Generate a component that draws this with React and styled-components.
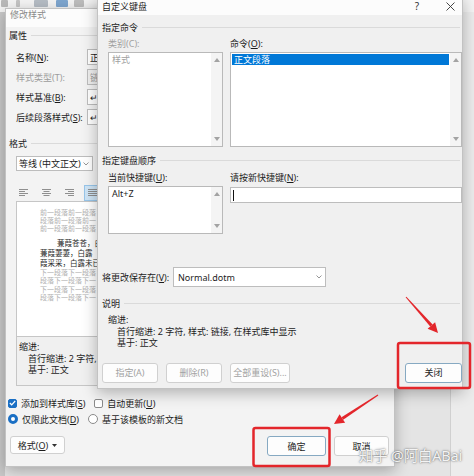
import React from "react";
import styled, { createGlobalStyle } from "styled-components";

const GlobalStyle = createGlobalStyle`
  html, body {
    margin: 0;
    padding: 0;
  }
  body {
    width: 474px;
    height: 476px;
    overflow: hidden;
    background: #e3e3e3;
    font-family: "Noto Sans", "Noto Sans CJK SC", sans-serif;
  }
`;

const Desktop = styled.div`
  position: relative;
  width: 474px;
  height: 476px;
  overflow: hidden;
  display: flex;
  flex-direction: column;
  font-family: "Noto Sans", "Noto Sans CJK SC", sans-serif;
  font-size: 9px;
  color: #1c1c1c;
`;

const Ribbon = styled.div`
  height: 12px;
  flex: none;
  display: flex;
  gap: 6px;
  padding-left: 1px;
  background: #f4f4f4;
`;

const RibbonIcon = styled.div`
  width: ${(p) => p.$w}px;
  height: 7px;
  margin-left: ${(p) => p.$ml || 0}px;
  background: ${(p) => p.$color};
  border-radius: 1px;
`;

const Workspace = styled.div`
  flex: 1;
  display: flex;
`;

const Gutter = styled.div`
  width: 5px;
  background: #c9c9c9;
`;

const Page = styled.div`
  flex: 1;
  background: #e4e4e4;
`;

const ScrollTrack = styled.div`
  width: 23px;
  background: #ececec;
  border-left: 1px solid #d0d0d0;
`;

/* ---------- windows ---------- */

const Window = styled.div`
  position: absolute;
  left: ${(p) => p.$left}px;
  top: ${(p) => p.$top}px;
  width: ${(p) => p.$width}px;
  height: ${(p) => p.$height}px;
  box-sizing: border-box;
  border: 1px solid #c2c2c2;
  background: ${(p) => p.$bg};
  box-shadow: 0 4px 14px rgba(0, 0, 0, 0.28);
  display: flex;
  flex-direction: column;
  overflow: hidden;
`;

const TitleBar = styled.div`
  height: ${(p) => p.$h}px;
  flex: none;
  display: flex;
  align-items: ${(p) => (p.$top ? "flex-start" : "center")};
  padding-left: 4px;
  background: #fcfcfc;
  color: ${(p) => p.$color || "#1c1c1c"};
  font-size: 9px;
  line-height: 11px;
`;

const TitleControls = styled.div`
  margin-left: auto;
  margin-right: 1px;
  display: flex;
  gap: 11px;
`;

const TitleControl = styled.div`
  width: 22px;
  height: 18px;
  display: flex;
  align-items: center;
  justify-content: center;
  font-size: 10px;
  color: #333;
`;

const SectionHeader = styled.div`
  height: ${(p) => p.$h || 16}px;
  margin-top: ${(p) => p.$mt || 0}px;
  margin-right: 2px;
  flex: none;
  display: flex;
  align-items: center;
  gap: 4px;
  white-space: nowrap;
  &::after {
    content: "";
    flex: 1;
    height: 1px;
    background: #dadada;
  }
`;

/* ---------- modify style dialog ---------- */

const ModifyBody = styled.div`
  flex: 1;
  display: flex;
  flex-direction: column;
  padding: 0 4px 0 3px;
`;

/* the right part of this dialog lies under the keyboard dialog,
   so its controls stop just past where that window begins */
const FieldGrid = styled.div`
  display: grid;
  grid-template-columns: 71px 13px;
  grid-auto-rows: 20px;
  align-items: center;
  margin: 4px 0 0 7px;
`;

const FieldLabel = styled.div`
  color: ${(p) => (p.$disabled ? "#9c9c9c" : "#1c1c1c")};
  white-space: nowrap;
`;

const FieldInput = styled.div`
  height: 16px;
  box-sizing: border-box;
  display: flex;
  align-items: center;
  padding-left: 2px;
  border: 1px solid #bdbdbd;
  border-right: none;
  background: ${(p) => (p.$disabled ? "#efefef" : "#fff")};
  color: ${(p) => (p.$disabled ? "#9c9c9c" : "#1c1c1c")};
  white-space: nowrap;
`;

const FontRow = styled.div`
  display: flex;
  gap: 5px;
  margin: 5px 0 0 7px;
`;

const SelectBox = styled.div`
  width: ${(p) => p.$w}px;
  height: ${(p) => p.$h}px;
  box-sizing: border-box;
  display: flex;
  align-items: center;
  gap: 2px;
  padding: 0 3px 0 ${(p) => p.$pl || 2}px;
  border: 1px solid #bdbdbd;
  background: #fff;
  white-space: nowrap;
  flex: none;
`;

const SelectText = styled.span`
  flex: 1;
`;

const AlignRow = styled.div`
  display: flex;
  gap: 7px;
  margin: 14px 0 0 6px;
`;

const AlignButton = styled.div`
  width: 16px;
  height: 16px;
  box-sizing: border-box;
  display: flex;
  align-items: center;
  justify-content: center;
  border: 1px solid ${(p) => (p.$active ? "#98c6ea" : "transparent")};
  background: ${(p) => (p.$active ? "#cfe5f6" : "transparent")};
`;

const Preview = styled.div`
  height: 135px;
  box-sizing: border-box;
  margin-left: 7px;
  padding: 7px 0 0 23px;
  border: 1px solid #c6c6c6;
  border-bottom: none;
  background: #fff;
  overflow: hidden;
  white-space: nowrap;
`;

const PreviewLine = styled.div`
  height: ${(p) => p.$lh}px;
  line-height: ${(p) => p.$lh}px;
  margin-top: ${(p) => p.$mt || 0}px;
  padding-left: ${(p) => p.$indent || 0}px;
  font-size: ${(p) => (p.$muted ? 7 : 7.5)}px;
  color: ${(p) => (p.$muted ? "#b0b0b0" : "#2a2a2a")};
`;

const Description = styled.div`
  height: 50px;
  box-sizing: border-box;
  margin-left: 7px;
  padding: 4px 0 0 2px;
  border: 1px solid #c6c6c6;
  background: #f0f0f0;
  line-height: 11.5px;
  white-space: nowrap;
  overflow: hidden;
`;

const DescLine = styled.div`
  padding-left: ${(p) => p.$indent || 0}px;
`;

const OptionRow = styled.div`
  height: 14px;
  margin-top: ${(p) => p.$mt}px;
  margin-left: -1px;
  display: flex;
  align-items: center;
  gap: 9px;
  white-space: nowrap;
`;

const OptionItem = styled.div`
  display: flex;
  align-items: center;
  gap: 4px;
`;

const Checkbox = styled.div`
  width: 9px;
  height: 9px;
  box-sizing: border-box;
  border-radius: 2px;
  border: 1px solid ${(p) => (p.$checked ? "#1a6fc4" : "#8a8a8a")};
  background: ${(p) => (p.$checked ? "#1a6fc4" : "#fff")};
  display: flex;
  align-items: center;
  justify-content: center;
`;

const Radio = styled.div`
  width: 10px;
  height: 10px;
  box-sizing: border-box;
  border-radius: 50%;
  border: ${(p) => (p.$checked ? "3px solid #1a6fc4" : "1px solid #8a8a8a")};
  background: #fff;
`;

const ButtonRow = styled.div`
  display: flex;
  align-items: flex-start;
  gap: 8px;
  margin-top: ${(p) => p.$mt}px;
  padding: 0 ${(p) => p.$pr || 0}px 0 ${(p) => p.$pl || 0}px;
`;

const Spacer = styled.div`
  flex: 1;
`;

const Button = styled.div`
  width: ${(p) => p.$w}px;
  height: ${(p) => p.$h || 20}px;
  box-sizing: border-box;
  display: flex;
  align-items: center;
  justify-content: center;
  gap: 4px;
  border-radius: 3px;
  border: 1px solid ${(p) => (p.$primary ? "#86a9c2" : "#d0d0d0")};
  background: #fdfdfd;
  color: ${(p) => (p.$disabled ? "#a2a2a2" : "#1c1c1c")};
  white-space: nowrap;
  flex: none;
`;

/* ---------- customize keyboard dialog ---------- */

const KbBody = styled.div`
  flex: 1;
  display: flex;
  flex-direction: column;
  padding-left: 4px;
`;

const TwoCols = styled.div`
  display: grid;
  grid-template-columns: 115px 232px;
  grid-template-rows: 12px auto;
  column-gap: 7px;
  row-gap: 2px;
  align-items: start;
  margin: ${(p) => p.$mt}px 0 0 6px;
`;

const ColLabel = styled.div`
  height: 12px;
  line-height: 12px;
  white-space: nowrap;
  color: ${(p) => (p.$disabled ? "#a0a0a0" : "#1c1c1c")};
`;

const ListBox = styled.div`
  height: ${(p) => p.$h}px;
  box-sizing: border-box;
  display: flex;
  border: 1px solid #b9b9b9;
  background: #fff;
`;

const ListContent = styled.div`
  flex: 1;
  padding: 1px;
`;

const ListItem = styled.div`
  height: 11px;
  line-height: 11px;
  padding-left: 2px;
  background: ${(p) => (p.$selected ? "#0078d7" : "transparent")};
  color: ${(p) => (p.$selected ? "#fff" : p.$disabled ? "#a0a0a0" : "#1c1c1c")};
`;

const ScrollCol = styled.div`
  width: 11px;
  display: flex;
  flex-direction: column;
  align-items: center;
  justify-content: space-between;
  padding: 5px 0;
  background: #f4f4f4;
`;

const KeyInput = styled.div`
  height: 16px;
  margin-top: 1px;
  box-sizing: border-box;
  display: flex;
  align-items: center;
  padding-left: 2px;
  border: 1px solid #bdbdbd;
  background: #fff;
`;

const Caret = styled.div`
  width: 1px;
  height: 11px;
  background: #111;
`;

const SaveRow = styled.div`
  height: 20px;
  margin-top: 33px;
  display: flex;
  align-items: center;
`;

const SaveLabel = styled.div`
  width: 71px;
  white-space: nowrap;
`;

const DescBlock = styled.div`
  margin: 5px 0 0 6px;
  line-height: 11.5px;
  white-space: nowrap;
`;

/* ---------- overlays ---------- */

const Annotations = styled.svg`
  position: absolute;
  left: 0;
  top: 0;
  pointer-events: none;
`;

const Watermark = styled.div`
  position: absolute;
  right: 12px;
  top: 444px;
  font-family: "Noto Sans", "Noto Sans CJK SC", sans-serif;
  font-size: 14.5px;
  letter-spacing: -0.2px;
  color: rgba(255, 255, 255, 0.92);
  text-shadow: 0 0 1.5px rgba(0, 0, 0, 0.55), 0 0 3px rgba(0, 0, 0, 0.25);
  white-space: nowrap;
`;

const Chevron = () => (
  <svg width="6" height="4" viewBox="0 0 6 4">
    <polyline points="0.5,0.5 3,3 5.5,0.5" fill="none" stroke="#8a8a8a" strokeWidth="0.9" />
  </svg>
);

const Arrow = ({ up }) => (
  <svg width="6" height="4" viewBox="0 0 6 4">
    <polygon points={up ? "0,4 3,0 6,4" : "0,0 3,4 6,0"} fill="#a3a3a3" />
  </svg>
);

const DropMark = () => (
  <svg width="5" height="3" viewBox="0 0 5 3">
    <polygon points="0,0 5,0 2.5,3" fill="#333" />
  </svg>
);

const AlignIcon = ({ kind }) => {
  const widths = [9, 6, 9, 6];
  return (
    <svg width="9" height="8" viewBox="0 0 9 8">
      {widths.map((w0, i) => {
        const w = kind === "justify" ? 9 : w0;
        const x = kind === "center" ? (9 - w) / 2 : kind === "right" ? 9 - w : 0;
        return <rect key={i} x={x} y={i * 2} width={w} height="1" fill="#8f8f8f" />;
      })}
    </svg>
  );
};

const Check = () => (
  <svg width="7" height="6" viewBox="0 0 7 6">
    <polyline points="0.8,3 2.7,4.8 6.2,1" fill="none" stroke="#fff" strokeWidth="1.2" />
  </svg>
);

function arrowShapes(x1, y1, x2, y2, head = 10, hw = 5) {
  const dx = x2 - x1;
  const dy = y2 - y1;
  const len = Math.hypot(dx, dy);
  const ux = dx / len;
  const uy = dy / len;
  const nx = -uy;
  const ny = ux;
  const bx = x2 - ux * head;
  const by = y2 - uy * head;
  const pt = (x, y) => `${x.toFixed(1)},${y.toFixed(1)}`;
  const shaft = [
    pt(x1 + nx * 0.5, y1 + ny * 0.5),
    pt(bx + nx * 1.6, by + ny * 1.6),
    pt(bx - nx * 1.6, by - ny * 1.6),
    pt(x1 - nx * 0.5, y1 - ny * 0.5),
  ].join(" ");
  const tip = [pt(x2, y2), pt(bx + nx * hw, by + ny * hw), pt(bx - nx * hw, by - ny * hw)].join(" ");
  return { shaft, tip };
}

const RED = "#e3262b";

export default function App() {
  const a1 = arrowShapes(406, 297, 438, 333);
  const a2 = arrowShapes(378, 395, 334, 424);

  return (
    <Desktop>
      <GlobalStyle />
      <Ribbon>
        <RibbonIcon $w={7} $color="#b9b9b9" />
        <RibbonIcon $w={4} $ml={2} $color="#c4c4c4" />
        <RibbonIcon $w={14} $ml={8} $color="#b5bcc4" />
        <RibbonIcon $w={12} $ml={2} $color="#7ea6cf" />
        <RibbonIcon $w={10} $color="#bdbdbd" />
      </Ribbon>
      <Workspace>
        <Gutter />
        <Page />
        <ScrollTrack />
      </Workspace>

      {/* 修改样式 */}
      <Window $left={5} $top={8} $width={390} $height={459} $bg="#f3f3f3">
        <TitleBar $h={18} $top $color="#8a8a8a">修改样式</TitleBar>
        <ModifyBody>
          <SectionHeader>属性</SectionHeader>
          <FieldGrid>
            <FieldLabel>名称(<u>N</u>):</FieldLabel>
            <FieldInput>正</FieldInput>
            <FieldLabel $disabled>样式类型(T):</FieldLabel>
            <FieldInput $disabled>链</FieldInput>
            <FieldLabel>样式基准(<u>B</u>):</FieldLabel>
            <FieldInput>↵</FieldInput>
            <FieldLabel>后续段落样式(<u>S</u>):</FieldLabel>
            <FieldInput>↵</FieldInput>
          </FieldGrid>
          <SectionHeader $mt={8}>格式</SectionHeader>
          <FontRow>
            <SelectBox $w={77} $h={15}>
              <SelectText>等线 (中文正文)</SelectText>
              <Chevron />
            </SelectBox>
            <SelectBox $w={10} $h={15} />
          </FontRow>
          <AlignRow>
            <AlignButton>
              <AlignIcon kind="left" />
            </AlignButton>
            <AlignButton>
              <AlignIcon kind="center" />
            </AlignButton>
            <AlignButton>
              <AlignIcon kind="right" />
            </AlignButton>
            <AlignButton $active>
              <AlignIcon kind="justify" />
            </AlignButton>
          </AlignRow>
          <Preview>
            <PreviewLine $lh={8} $muted>前一段落前一段落</PreviewLine>
            <PreviewLine $lh={8} $muted>段落前一段落前一</PreviewLine>
            <PreviewLine $lh={8} $muted>前一段落前一段落</PreviewLine>
            <PreviewLine $lh={10} $mt={5} $indent={17}>蒹葭苍苍，白</PreviewLine>
            <PreviewLine $lh={10}>蒹葭萋萋，白露</PreviewLine>
            <PreviewLine $lh={10}>葭采采，白露未已</PreviewLine>
            <PreviewLine $lh={8.5} $mt={0.5} $muted>下一段落下一段落</PreviewLine>
            <PreviewLine $lh={8.5} $muted>段落下一段落下一</PreviewLine>
            <PreviewLine $lh={8.5} $muted>下一段落下一段落</PreviewLine>
            <PreviewLine $lh={8.5} $muted>段落下一段落下一</PreviewLine>
          </Preview>
          <Description>
            <DescLine>缩进:</DescLine>
            <DescLine $indent={9}>首行缩进: 2 字符,</DescLine>
            <DescLine $indent={9}>基于: 正文</DescLine>
          </Description>
          <OptionRow $mt={10}>
            <OptionItem>
              <Checkbox $checked>
                <Check />
              </Checkbox>
              <span>添加到样式库(<u>S</u>)</span>
            </OptionItem>
            <OptionItem>
              <Checkbox />
              <span>自动更新(<u>U</u>)</span>
            </OptionItem>
          </OptionRow>
          <OptionRow $mt={2}>
            <OptionItem>
              <Radio $checked />
              <span>仅限此文档(<u>D</u>)</span>
            </OptionItem>
            <OptionItem>
              <Radio />
              <span>基于该模板的新文档</span>
            </OptionItem>
          </OptionRow>
          <ButtonRow $mt={10} $pl={1} $pr={1}>
            <Button $w={55} $h={18}>
              <span>格式(<u>O</u>)</span>
              <DropMark />
            </Button>
            <Spacer />
            <Button $w={59} $primary>确定</Button>
            <Button $w={55}>取消</Button>
          </ButtonRow>
        </ModifyBody>
      </Window>

      {/* 自定义键盘 */}
      <Window $left={97} $top={-4} $width={366} $height={393} $bg="#f0f0f0">
        <TitleBar $h={18}>
          自定义键盘
          <TitleControls>
            <TitleControl>?</TitleControl>
            <TitleControl>
              <svg width="9" height="9" viewBox="0 0 9 9">
                <path d="M0.5 0.5 L8.5 8.5 M8.5 0.5 L0.5 8.5" stroke="#333" strokeWidth="0.9" />
              </svg>
            </TitleControl>
          </TitleControls>
        </TitleBar>
        <KbBody>
          <SectionHeader $h={12} $mt={6}>指定命令</SectionHeader>
          <TwoCols $mt={5}>
            <ColLabel $disabled>类别(C):</ColLabel>
            <ColLabel>命令(<u>O</u>):</ColLabel>
            <ListBox $h={95}>
              <ListContent>
                <ListItem $disabled>样式</ListItem>
              </ListContent>
              <ScrollCol>
                <Arrow up />
                <Arrow />
              </ScrollCol>
            </ListBox>
            <ListBox $h={95}>
              <ListContent>
                <ListItem $selected>正文段落</ListItem>
              </ListContent>
              <ScrollCol>
                <Arrow up />
                <Arrow />
              </ScrollCol>
            </ListBox>
          </TwoCols>

          <SectionHeader $h={12} $mt={7}>指定键盘顺序</SectionHeader>
          <TwoCols $mt={6}>
            <ColLabel>当前快捷键(<u>U</u>):</ColLabel>
            <ColLabel>请按新快捷键(<u>N</u>):</ColLabel>
            <ListBox $h={48}>
              <ListContent>
                <ListItem>Alt+Z</ListItem>
              </ListContent>
              <ScrollCol>
                <Arrow up />
                <Arrow />
              </ScrollCol>
            </ListBox>
            <KeyInput>
              <Caret />
            </KeyInput>
          </TwoCols>

          <SaveRow>
            <SaveLabel>将更改保存在(<u>V</u>):</SaveLabel>
            <SelectBox $w={153} $h={20} $pl={4}>
              <SelectText>Normal.dotm</SelectText>
              <Chevron />
            </SelectBox>
          </SaveRow>

          <SectionHeader $h={12} $mt={10}>说明</SectionHeader>
          <DescBlock>
            <DescLine>缩进:</DescLine>
            <DescLine $indent={9}>首行缩进: 2 字符, 样式: 链接, 在样式库中显示</DescLine>
            <DescLine $indent={9}>基于: 正文</DescLine>
          </DescBlock>

          <ButtonRow $mt={14}>
            <Button $w={56} $disabled>指定(A)</Button>
            <Button $w={56} $disabled>删除(R)</Button>
            <Button $w={60} $disabled>全部重设(S)...</Button>
            <Spacer />
            <Button $w={57} $primary>关闭</Button>
          </ButtonRow>
        </KbBody>
      </Window>

      <Annotations width="474" height="476" viewBox="0 0 474 476">
        <rect x="398" y="343" width="72" height="45" rx="2" fill="none" stroke={RED} strokeWidth="2.5" />
        <rect x="253.5" y="428" width="76" height="38" rx="2" fill="none" stroke={RED} strokeWidth="2.5" />
        <polygon points={a1.shaft} fill={RED} />
        <polygon points={a1.tip} fill={RED} />
        <polygon points={a2.shaft} fill={RED} />
        <polygon points={a2.tip} fill={RED} />
      </Annotations>

      <Watermark>知乎 @阿白ABai</Watermark>
    </Desktop>
  );
}
